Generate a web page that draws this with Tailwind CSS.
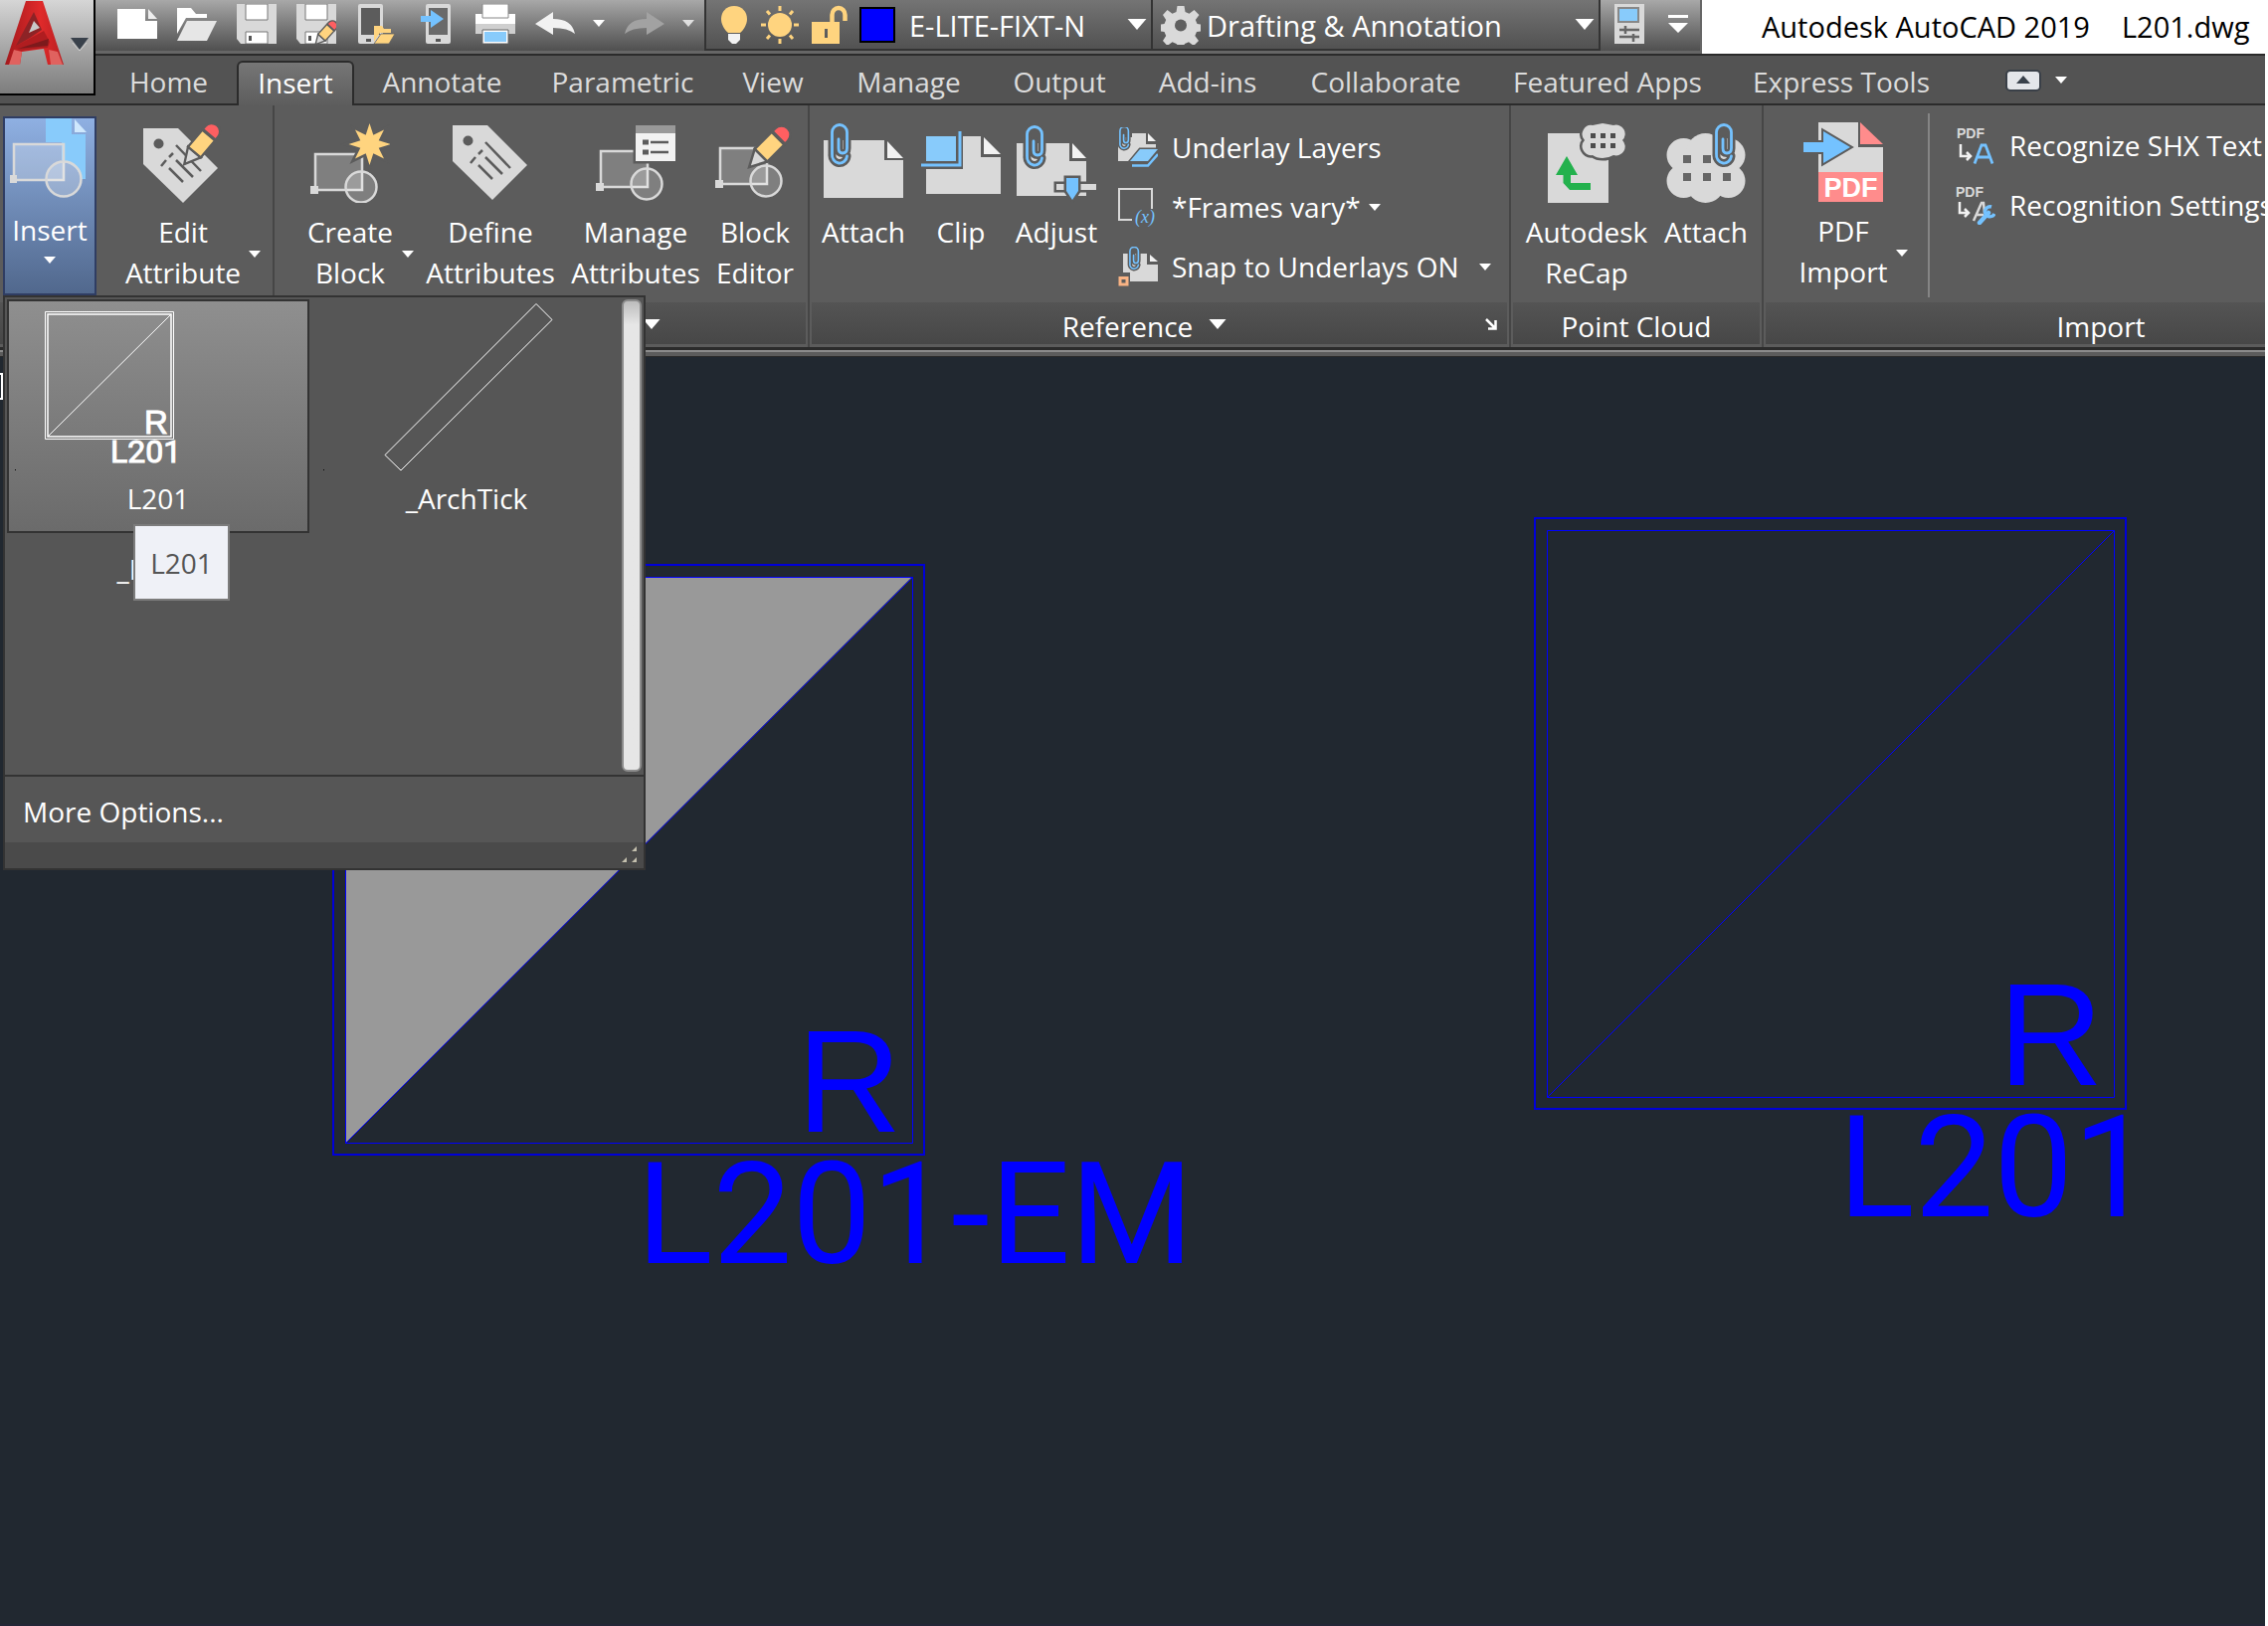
<!DOCTYPE html>
<html lang="en">
<head>
<meta charset="utf-8">
<meta name="viewport" content="width=device-width, initial-scale=1">
<title>Autodesk AutoCAD 2019 - L201.dwg</title>
<script src="https://cdn.jsdelivr.net/npm/@tailwindcss/browser@4"></script>
</head>
<body class="bg-white pr-[3px] min-h-screen flex flex-col overflow-x-hidden font-['Open_Sans',sans-serif] text-[28px] leading-[41px] text-white whitespace-nowrap">

<!-- shared icon parts -->
<svg class="hidden" aria-hidden="true">
  <symbol id="clip" viewBox="0 0 28 46" overflow="visible">
    <g fill="none" stroke-linecap="round">
      <path d="M15 17V26Q15 31 19 31Q23.500 31 23.500 26V10a7.500 7.500 0 0 0-15 0V32a7.500 8 0 0 0 15 2" stroke="#5c5c5c" stroke-width="8"/>
      <path d="M15 17V26Q15 31 19 31Q23.500 31 23.500 26V10a7.500 7.500 0 0 0-15 0V32a7.500 8 0 0 0 15 2" stroke="#74c2ff" stroke-width="2.800"/>
    </g>
  </symbol>
  <symbol id="pencil" viewBox="0 0 56 20" overflow="visible">
    <g stroke="#5c5c5c" stroke-width="2.500">
      <path d="M0 10L17 1V19Z" fill="#d9d9d9"/>
      <path d="M17 1H41V19H17Z" fill="#ffd47f"/>
      <path d="M42 1H46a9 9 0 0 1 0 18H42Z" fill="#ff5f61"/>
    </g>
  </symbol>
  <symbol id="block" viewBox="0 0 72 50" overflow="visible">
    <path d="M5 4H52V40H5Z" fill="#fff" fill-opacity=".22" stroke="#d9d9d9" stroke-width="2.500"/>
    <rect x="0" y="36" width="8" height="8" fill="#d9d9d9"/>
    <circle cx="51" cy="37" r="15.500" fill="#fff" fill-opacity=".22" stroke="#d9d9d9" stroke-width="2.500"/>
  </symbol>
  <symbol id="tag" viewBox="0 0 80 80" overflow="visible">
    <path d="M0 2H35L75 42L40 77L0 38Z" fill="#d9d9d9"/>
    <circle cx="15.500" cy="17.500" r="5" fill="#5c5c5c"/>
    <path d="M33 19L58 45M30 27L26 31M23 34L18 40M33 34L50 51M26 42L40 56" fill="none" stroke="#5c5c5c" stroke-width="2.500"/>
  </symbol>
  <symbol id="down" viewBox="0 0 12 7"><path d="M0 0H12L6 7Z" fill="#fff"/></symbol>
</svg>

<header class="flex items-start bg-[#535353] border-b-2 border-[#2b2b2b]">
  <button aria-label="Application menu" class="shrink-0 w-24 h-24 flex items-start border-r-2 border-b-2 border-black bg-linear-to-b from-[#d6d6d6] to-[#7d7d7d]">
    <svg class="w-[94px] h-[90px]" viewBox="0 0 94 90">
      <defs><linearGradient id="red" x1="0" x2="1"><stop offset="0" stop-color="#a3191d"/><stop offset=".6" stop-color="#e02a2a"/><stop offset="1" stop-color="#b81f22"/></linearGradient></defs>
      <path d="M26 1H43L64 65H48L44 49L22 52L20 65H5Z" fill="url(#red)"/>
      <path d="M34 12L16 46L30 38L42 30Z" fill="#8d2326"/>
      <path d="M34 21L29 33L40 28Z" fill="#c9c9c9"/>
      <path d="M15 47L44 31L50 42L48 48L20 51Z" fill="#b01d20"/>
      <path d="M18 49L49 39L48 46Z" fill="#7d1a1c"/>
      <path d="M14 50L22 52L20 65H9Z" fill="#e0625f"/><path d="M49 50L58 52L63 65H51Z" fill="#e0625f"/>
      <path d="M71 38H89L80 50Z" fill="#39414b"/><path d="M73 43L80 51L87 43" fill="none" stroke="#d0d0d0" stroke-width="1"/>
    </svg>
  </button>
  <div class="flex-1 min-w-0">
    <div class="flex h-14 border-b-2 border-[#2b2b2b] bg-white overflow-hidden text-[29px]">
      <div class="shrink-0 flex w-[1615px] border-b-3 border-[#666] border-r-2 bg-linear-to-b from-[#a8a8a8] to-[#505050]">
        <div class="flex items-center w-[612px] pl-[22px] pb-1 gap-5">
          <button aria-label="New"><svg class="w-10 h-10" viewBox="0 0 40 40"><path d="M0 5H28V17H40V35H0Z" fill="#fff"/><path d="M31 5L40 15H31Z" fill="#eee"/></svg></button>
          <button aria-label="Open"><svg class="w-10 h-10" viewBox="0 0 40 40"><path d="M0 4H14L19 10H30V14H9L0 30Z" fill="#fff"/><path d="M10 17H40L30 37H0Z" fill="#e6e6e6"/></svg></button>
          <button aria-label="Save"><svg class="w-10 h-10" viewBox="0 0 40 40"><path d="M0 0H40V40H4L0 35Z" fill="#d9d9d9"/><path d="M9 0H31V16H9Z" fill="#fff" stroke="#777"/><path d="M9 28H31V40H9Z" fill="#fff" stroke="#777"/><path d="M12 32H15V37H12Z" fill="#555"/></svg></button>
          <button aria-label="Save as"><svg class="w-10 h-10" viewBox="0 0 40 40"><path d="M0 0H40V40H4L0 35Z" fill="#d9d9d9"/><path d="M9 0H31V16H9Z" fill="#fff" stroke="#777"/><path d="M9 28H31V40H9Z" fill="#fff" stroke="#777"/><path d="M12 32H15V37H12Z" fill="#555"/><use href="#pencil" width="31" height="11" transform="translate(15 37) rotate(-48)"/></svg></button>
          <button aria-label="Open from mobile"><svg class="w-10 h-10" viewBox="0 0 40 40"><rect x="2" width="25" height="40" rx="2" fill="#d9d9d9"/><path d="M5 4H24V31H5Z" fill="#5c5c5c"/><path d="M10 35H15V38H10Z" fill="#555"/><path d="M18 22H26L28 25H35V29H24L18 38Z" fill="#ffd47f"/><path d="M25 30H39L33 40H18Z" fill="#ffd47f" stroke="#666" stroke-width=".8"/></svg></button>
          <button aria-label="Save to mobile"><svg class="w-10 h-10" viewBox="0 0 40 40"><rect x="10" width="25" height="40" rx="2" fill="#d9d9d9"/><path d="M13 4H32V31H13Z" fill="#6a6a6a"/><path d="M20 35H25V38H20Z" fill="#555"/><path d="M5 12H15V6L28 15L15 24V18H5Z" fill="#74c2ff"/></svg></button>
          <button aria-label="Plot"><svg class="w-10 h-10" viewBox="0 0 40 40"><path d="M0 10H40V30H0Z" fill="#fff"/><path d="M0 20H40V30H0Z" fill="#cfcfcf"/><path d="M7 0H33V14H7Z" fill="#fff" stroke="#888"/><path d="M7 26H33V40H7Z" fill="#fff" stroke="#666"/><path d="M9 28H31V38H9Z" fill="#88cbfb"/></svg></button>
          <button aria-label="Undo"><svg class="w-10 h-10" viewBox="0 0 40 40"><path d="M0 20L18 8V15Q37 15 40 30Q33 24 18 24V31Z" fill="#f2f2f2"/></svg></button>
          <button aria-label="Undo history" class="-ml-0.5"><svg class="w-3 h-[7px]"><use href="#down"/></svg></button>
          <button aria-label="Redo"><svg class="w-10 h-10" viewBox="0 0 40 40"><path d="M40 20L22 8V15Q3 15 0 30Q7 24 22 24V31Z" fill="#a2a2a2"/></svg></button>
          <button aria-label="Redo history" class="-ml-0.5 opacity-75"><svg class="w-3 h-[7px]"><use href="#down"/></svg></button>
        </div>
        <div class="flex items-center w-[451px] pl-3.5 pr-1 gap-3 border-2 border-t-0 border-[#333] bg-linear-to-b from-[#747474] to-[#525252]">
          <svg class="shrink-0 w-7 h-10" viewBox="0 0 28 40"><path d="M14 1C6 1 1 7 1 14C1 19 4 25 8 28H20C24 25 27 19 27 14C27 7 22 1 14 1Z" fill="#ffd47f"/><path d="M8 29H20V35L16 39H12L8 35Z" fill="#f2f2f2"/></svg>
          <svg class="shrink-0 w-10 h-10" viewBox="-1 0 40 40"><ellipse cx="19" cy="20" rx="12" ry="12" fill="#ffd47f"/><path d="M19 1V6M19 34V39M0 20H5M33 20H38M6 6L9 9.500M32 6L29 9.500M6 34L9 30.500M32 34L29 30.500" stroke="#ffd47f" stroke-width="3"/></svg>
          <svg class="shrink-0 w-9 h-10" viewBox="0 0 36 40"><path d="M0 17H28V39H0ZM13 24V33H16V24Z" fill="#ffd47f" fill-rule="evenodd"/><path d="M20.500 17V10a6.500 7 0 0 1 13 0V16" fill="none" stroke="#ffd47f" stroke-width="4.500"/></svg>
          <span class="shrink-0 w-9 h-9 bg-[#00f] border-2 border-black"></span>
          <select aria-label="Layer" class="appearance-none bg-transparent flex-1 min-w-0 pl-0.5 pt-0.5 outline-none"><option>E-LITE-FIXT-N</option></select>
          <svg class="shrink-0 w-5 h-[11px] pointer-events-none"><use href="#down"/></svg>
        </div>
        <div class="flex items-center w-[450px] pl-2 pr-1 gap-1.5 border-2 border-l-0 border-t-0 border-[#333] bg-linear-to-b from-[#747474] to-[#525252]">
          <svg class="shrink-0 w-10 h-10" viewBox="0 0 40 40"><path d="M16.500 1h7l1 6 4 1.700 5-3.700 5 5-3.700 5 1.700 4 3.500.5v7l-4 .5-1.700 4 3.700 5-5 5-5-3.700-4 1.700-.5 1h-7l-1-1-4-1.700-5 3.700-4.500-5 3.200-5-1.700-4-4-.5v-7l4-.5 1.700-4-3.200-5 4.500-5 5 3.700 4-1.700Z" fill="#d9d9d9"/><circle cx="20" cy="20.500" r="6" fill="#5f5f5f"/></svg>
          <select aria-label="Workspace" class="appearance-none bg-transparent flex-1 min-w-0 pt-0.5 outline-none"><option>Drafting &amp; Annotation</option></select>
          <svg class="shrink-0 w-5 h-[11px] pointer-events-none"><use href="#down"/></svg>
        </div>
        <div class="flex items-center pl-3.5 pb-1 gap-6">
          <button aria-label="Properties"><svg class="w-[30px] h-10" viewBox="0 0 30 40"><path d="M0 0H30V40H0Z" fill="#d9d9d9"/><path d="M4 4H24V18H4Z" fill="#88cbfb" stroke="#888" stroke-width="2"/><path d="M5 26H25M5 33H25" stroke="#666" stroke-width="2.500"/><path d="M11 22V30M19 30V38" stroke="#666" stroke-width="2.500"/></svg></button>
          <button aria-label="Customize toolbar"><svg class="w-5 h-[18px]" viewBox="0 0 20 18"><path d="M0 0H20V3H0ZM0 8H20L10 18Z" fill="#fff"/></svg></button>
        </div>
      </div>
      <h1 class="flex-1 flex items-center pl-[60px] pb-0.5 gap-8 text-black"><span>Autodesk AutoCAD 2019</span><span>L201.dwg</span></h1>
    </div>
    <nav aria-label="Ribbon tabs" class="flex h-12 pt-[5px] pl-[5px] text-[#dcdcdc]">
      <button class="shrink-0 w-[137px] pb-px">Home</button>
      <button class="shrink-0 w-[118px] h-[45px] relative pb-1 border-2 border-b-0 border-[#2b2b2b] rounded-t-md bg-linear-to-b from-[#767676] to-[#5d5d5d] text-white">Insert</button>
      <button class="shrink-0 w-[177px] pb-px">Annotate</button>
      <button class="shrink-0 w-[186px] pb-px">Parametric</button>
      <button class="shrink-0 w-[116px] pb-px">View</button>
      <button class="shrink-0 w-[157px] pb-px">Manage</button>
      <button class="shrink-0 w-[146px] pb-px">Output</button>
      <button class="shrink-0 w-[152px] pb-px">Add-ins</button>
      <button class="shrink-0 w-[206px] pb-px">Collaborate</button>
      <button class="shrink-0 w-[240px] pb-px">Featured Apps</button>
      <button class="shrink-0 w-[230px] pb-px">Express Tools</button>
      <div class="flex items-center pl-[50px] gap-3.5 pb-1">
        <button aria-label="Minimize ribbon"><svg class="w-9 h-[22px]" viewBox="0 0 36 22"><rect x="1" y="1" width="34" height="20" rx="4" fill="#e4e6ea" stroke="#3a4048" stroke-width="2"/><path d="M11 14H25L18 6Z" fill="#39414b"/></svg></button>
        <button aria-label="Ribbon display options"><svg class="w-3 h-[7px]"><use href="#down"/></svg></button>
      </div>
    </nav>
  </div>
</header>

<div class="relative flex-1 flex flex-col">
  <div class="flex h-[243px] overflow-hidden bg-[#5c5c5c] text-center">

    <section aria-label="Block" class="shrink-0 w-[274px] flex flex-col">
      <div class="flex items-start h-[198px] pl-[3px]">
        <button class="shrink-0 w-[94px] h-[180px] mt-[11px] border-2 border-[#2f3d63] bg-linear-to-b from-[#8fb0e2] to-[#51688d] flex flex-col items-center">
          <svg class="w-20 h-20" viewBox="0 0 80 80">
            <path d="M36 0H62V16H76V61H72Q69 48 52 42V24H36Z" fill="#88cbfb"/><path d="M65 1L77 14H65Z" fill="#cfe8fd"/>
            <path d="M4 26H54V62H4Z" fill="#fff" fill-opacity=".25" stroke="#d9d9d9" stroke-width="2.500"/>
            <rect x="0" y="57" width="7" height="8" fill="#d9d9d9"/>
            <circle cx="54" cy="61" r="17.500" fill="#fff" fill-opacity=".25" stroke="#d9d9d9" stroke-width="2.500"/>
          </svg>
          <span class="mt-3">Insert</span>
          <svg class="w-3 h-[7px] mt-1.5"><use href="#down"/></svg>
        </button>
        <button class="ml-[23px] pt-[18px] flex items-center">
          <span class="w-32 flex flex-col items-center">
            <svg class="w-20 h-20" viewBox="0 0 80 80"><use href="#tag" y="3" width="80" height="80"/><use href="#pencil" width="52" height="19" transform="translate(34 35) rotate(-50)"/></svg>
            <span class="mt-[9px]">Edit<br>Attribute</span>
          </span>
          <svg class="ml-0.5 mt-[92px] w-3 h-[7px]"><use href="#down"/></svg>
        </button>
      </div>
      <div class="h-[42px] mr-0.5 bg-linear-to-b from-[#545454] to-[#474747]"></div>
    </section>

    <section aria-label="Block Definition" class="shrink-0 w-[538px] flex flex-col border-l-2 border-[#464646]">
      <div class="flex items-start h-[198px] pl-[26px] pt-[18px]">
        <button class="flex items-center">
          <span class="w-[100px] flex flex-col items-center">
            <svg class="w-20 h-20" viewBox="0 0 80 80"><use href="#block" y="27" width="72" height="50"/><path transform="translate(59.500 21)" d="M0-21L3.800-9.200L14.500-14.500L9.200-3.800L21 0L9.200 3.800L14.500 14.500L3.800 9.200L0 21L-3.800 9.200L-14.500 14.500L-9.200 3.800L-21 0L-9.200-3.800L-14.500-14.500L-3.800-9.200Z" fill="#ffd47f" stroke="#5c5c5c" stroke-width="5" paint-order="stroke"/></svg>
            <span class="mt-[9px]">Create<br>Block</span>
          </span>
          <svg class="ml-0.5 mt-[92px] w-3 h-[7px]"><use href="#down"/></svg>
        </button>
        <button class="ml-3 w-[130px] shrink-0 flex flex-col items-center">
          <svg class="w-20 h-20" viewBox="-2 0 80 80"><use href="#tag" width="80" height="80"/></svg>
          <span class="mt-[9px]">Define<br>Attributes</span>
        </button>
        <button class="ml-4 w-[130px] shrink-0 flex flex-col items-center">
          <svg class="w-20 h-20" viewBox="0 0 80 80"><use href="#block" y="24" width="72" height="50"/><path d="M40 2H80V38H40Z" fill="#f2f2f2" stroke="#5c5c5c" stroke-width="5" paint-order="stroke"/><path d="M40 2H80V10H40Z" fill="#999"/><path d="M47 16.500h6v5h-6zM47 26.500h6v5h-6z" fill="#5c5c5c"/><path d="M55 19H73M55 29H73" stroke="#5c5c5c" stroke-width="2.500"/></svg>
          <span class="mt-[9px]">Manage<br>Attributes</span>
        </button>
        <button class="ml-[15px] w-20 shrink-0 flex flex-col items-center">
          <svg class="w-20 h-20" viewBox="0 0 80 80"><use href="#block" y="21" width="72" height="50"/><use href="#pencil" width="56" height="20" transform="translate(27 37) rotate(-45)"/></svg>
          <span class="mt-[9px]">Block<br>Editor</span>
        </button>
      </div>
      <div class="h-[42px] mx-0.5 pt-1 flex justify-center items-start gap-4 bg-linear-to-b from-[#545454] to-[#474747]">
        <span>Block Definition</span><svg class="mt-[13px] w-[18px] h-2.5"><use href="#down"/></svg>
      </div>
    </section>

    <section aria-label="Reference" class="shrink-0 w-[705px] flex flex-col border-l-2 border-[#464646]">
      <div class="flex items-start h-[198px] pl-[11px] pt-[18px]">
        <button class="w-[86px] shrink-0 flex flex-col items-center">
          <svg class="w-20 h-20" viewBox="0 0 80 80"><path d="M0 17H61V37H80V75H0Z" fill="#d9d9d9"/><path d="M64 18L80 35H64Z" fill="#f2f2f2"/><use href="#clip" width="28" height="46" y="-1"/></svg>
          <span class="mt-[9px]">Attach</span>
        </button>
        <button class="ml-[15px] w-20 shrink-0 flex flex-col items-center">
          <svg class="w-20 h-20" viewBox="0 0 80 80"><path d="M42 13H60V34H80V71H5V46H42Z" fill="#d9d9d9"/><path d="M63 14L80 31H63Z" fill="#f2f2f2"/><path d="M5 13H35V38H5Z" fill="#88cbfb"/><path d="M39 8V42H0" fill="none" stroke="#74c2ff" stroke-width="3"/></svg>
          <span class="mt-[9px]">Clip</span>
        </button>
        <button class="ml-[13px] w-[86px] shrink-0 flex flex-col items-center">
          <svg class="w-20 h-20" viewBox="0 0 80 80"><path d="M0 20H53V38H70V73H0Z" fill="#d9d9d9"/><path d="M56 20L70 35H56Z" fill="#f2f2f2"/><use href="#clip" width="28" height="46" x="2" y="1"/><path d="M40 61H80V67H40Z" fill="#d9d9d9" stroke="#5c5c5c" stroke-width="5" paint-order="stroke"/><path d="M50 55H62V68L56 77L50 68Z" fill="#74c2ff" stroke="#5c5c5c" stroke-width="5" paint-order="stroke"/></svg>
          <span class="mt-[9px]">Adjust</span>
        </button>
        <div class="ml-[19px] pt-1 flex flex-col gap-5">
          <button class="h-10 flex items-center gap-3.5">
            <svg class="w-10 h-10" viewBox="0 0 40 40"><path d="M0 10H14V6H28V17H38V24L22 34H0Z" fill="#d9d9d9"/><path d="M30 6L38 14H30Z" fill="#f2f2f2"/><path d="M22 22H40L30 34H12Z" fill="#88cbfb" stroke="#5c5c5c" stroke-width="3" paint-order="stroke"/><path d="M40 27L30 38.500H14" fill="none" stroke="#74c2ff" stroke-width="2.500"/><use href="#clip" width="16" height="26" x="-3" y="-2"/></svg>
            <span>Underlay Layers</span>
          </button>
          <button class="h-10 flex items-center">
            <svg class="w-10 h-10" viewBox="0 0 40 40"><path d="M14 33H1V2H34V22" fill="none" stroke="#d9d9d9" stroke-width="2"/><text x="17" y="36" font-family="Liberation Serif" font-style="italic" font-size="18" fill="#74c2ff">(x)</text></svg>
            <span class="ml-3.5 mr-2">*Frames vary*</span><svg class="w-3 h-[7px]"><use href="#down"/></svg>
          </button>
          <button class="h-10 flex items-center">
            <svg class="w-10 h-10" viewBox="0 0 40 40"><path d="M5 7H29V18H40V35H12V26H5Z" fill="#d9d9d9"/><path d="M32 8L40 15H32Z" fill="#f2f2f2"/><use href="#clip" width="16" height="26" x="7" y="-1"/><path d="M2 31.500H9V38H2Z" fill="none" stroke="#f9b384" stroke-width="3"/></svg>
            <span class="ml-3.5 mr-5">Snap to Underlays ON</span><svg class="w-3 h-[7px]"><use href="#down"/></svg>
          </button>
        </div>
      </div>
      <div class="h-[42px] mx-0.5 pt-1 flex items-start bg-linear-to-b from-[#545454] to-[#474747]">
        <div class="flex-1 flex justify-center gap-4 pr-2"><span>Reference</span><svg class="mt-[13px] w-[18px] h-2.5"><use href="#down"/></svg></div>
        <button aria-label="Reference settings" class="mt-3 mr-2.5"><svg class="w-3 h-3" viewBox="0 0 12 12"><path d="M1 1L10 10M3 10.500H10.500V2" fill="none" stroke="#fff" stroke-width="2.500"/></svg></button>
      </div>
    </section>

    <section aria-label="Point Cloud" class="shrink-0 w-[254px] flex flex-col border-l-2 border-[#464646]">
      <div class="flex items-start h-[198px] pl-[11px] pt-[18px]">
        <button class="w-[130px] shrink-0 flex flex-col items-center">
          <svg class="w-20 h-20" viewBox="0 0 80 80"><path d="M1 10H62V80H1Z" fill="#d9d9d9"/>
            <g fill="#d9d9d9" stroke="#5c5c5c" stroke-width="5" paint-order="stroke"><path d="M46 2q5-1 10-2q6 1 11 2a9 9 0 0 1 9 15a9 9 0 0 1-9 15q-5 3-11 3q-6 0-10-3a9 9 0 0 1-8-15a9 9 0 0 1 8-15Z"/></g>
            <path d="M44 10h5v5h-5zM54 10h5v5h-5zM64 10h5v5h-5zM44 20h5v5h-5zM54 20h5v5h-5zM64 20h5v5h-5z" fill="#4c4c4c"/>
            <path d="M20 33L31 52H24V60H44V67H23L16.500 60V52H9Z" fill="#23b14d"/></svg>
          <span class="mt-[9px]">Autodesk<br>ReCap</span>
        </button>
        <button class="ml-3 w-[86px] shrink-0 flex flex-col items-center">
          <svg class="w-20 h-20" viewBox="0 0 80 80"><g fill="#d9d9d9"><circle cx="17.500" cy="32" r="17"/><circle cx="39.500" cy="29" r="19"/><circle cx="62.500" cy="32" r="17"/><circle cx="17.500" cy="58" r="17"/><circle cx="39.500" cy="61" r="19"/><circle cx="62.500" cy="58" r="17"/><path d="M12 30H68V60H12Z"/></g><path d="M17 32h8v8h-8zM37 32h8v8h-8zM17 50h8v8h-8zM37 50h8v8h-8zM57 50h8v8h-8z" fill="#666"/><use href="#clip" width="28" height="46" x="42" y="-1"/></svg>
          <span class="mt-[9px]">Attach</span>
        </button>
      </div>
      <div class="h-[42px] mx-0.5 pt-1 bg-linear-to-b from-[#545454] to-[#474747]">Point Cloud</div>
    </section>

    <section aria-label="Import" class="shrink-0 w-[680px] flex flex-col border-l-2 border-[#464646]">
      <div class="flex items-start h-[198px] pl-[30px]">
        <button class="pt-[17px] flex items-center">
          <span class="w-[100px] flex flex-col items-center">
            <svg class="w-20 h-20" viewBox="0 0 80 80"><path d="M15 0H55V25H80V50H15Z" fill="#d9d9d9"/><path d="M57 0L80 22H57Z" fill="#ff8c8c"/><path d="M15 50H80V80H15Z" fill="#ff8c8c"/><text x="47.500" y="75" text-anchor="middle" font-family="Liberation Sans" font-weight="700" font-size="27" fill="#fff">PDF</text><path d="M0 20H20V9L47 25L20 41V30H0Z" fill="#74c2ff" stroke="#5c5c5c" stroke-width="4" paint-order="stroke"/></svg>
            <span class="mt-[9px]">PDF<br>Import</span>
          </span>
          <svg class="ml-[3px] mt-[92px] w-3 h-[7px]"><use href="#down"/></svg>
        </button>
        <div class="ml-5 mt-2 w-0.5 h-[185px] bg-[#858585]"></div>
        <div class="ml-[26px] pt-5 flex flex-col gap-5">
          <button class="h-10 flex items-center gap-3.5">
            <svg class="w-10 h-10" viewBox="0 0 40 40"><text x="1" y="13" font-family="Liberation Sans" font-size="14" font-weight="700" fill="#d9d9d9">PDF</text><path d="M5 19V31H14M11 27L15 31L11 35" fill="none" stroke="#f2f2f2" stroke-width="2.500"/><path d="M19 38.500L26 20H30L37 38.500M22 32H34" fill="none" stroke="#74c2ff" stroke-width="2.800"/></svg>
            <span>Recognize SHX Text</span>
          </button>
          <button class="h-10 flex items-center gap-3.5">
            <svg class="w-10 h-10" viewBox="0 0 40 40"><text x="0" y="12" font-family="Liberation Sans" font-size="14" font-weight="700" fill="#d9d9d9">PDF</text><path d="M4 17V28H12M9 24L13 28L9 32" fill="none" stroke="#f2f2f2" stroke-width="2.500"/><path d="M18 36L26 18H28L29 28M21 30H28" fill="none" stroke="#d9d9d9" stroke-width="2.500"/><path d="M24 38L33 28" stroke="#74c2ff" stroke-width="4.500" stroke-linecap="round"/><path d="M36 22a5 5 0 1 0 3 7" fill="none" stroke="#74c2ff" stroke-width="3.500"/></svg>
            <span>Recognition Settings</span>
          </button>
        </div>
      </div>
      <div class="h-[42px] mx-0.5 pt-1 bg-linear-to-b from-[#545454] to-[#474747]">Import</div>
    </section>
  </div>
  <div class="h-2.5 border-t-3 border-b-1 border-[#2b2b2b] bg-linear-to-b from-[#8b8b8b] from-30% to-[#5c5c5c] to-30%"></div>

  <main aria-label="Drawing area" class="relative flex-1 bg-[#212830] border-b-2 border-[#232636] overflow-hidden">
    <span class="absolute left-0 top-4 w-[3px] h-[27px] border-2 border-l-0 border-white"></span>
    <svg class="absolute left-[334px] top-[208px] w-[940px] h-[740px]" viewBox="0 0 940 740">
      <path d="M13 13H583L13 583Z" fill="#999"/>
      <g fill="none" stroke="#00f"><path d="M1 1H595V594H1Z" stroke="#0000d8" stroke-width="2"/><path d="M13.500 13.500H583.500V582.500H13.500ZM13.500 582.500L583.500 13.500"/></g>
      <text x="467" y="571" font-family="Liberation Sans" font-size="146" fill="#00f">R</text>
      <text x="306" y="703" font-family="Roboto" font-size="142" fill="#00f">L201-EM</text>
    </svg>
    <svg class="absolute left-[1542px] top-[161px] w-[640px] h-[740px]" viewBox="0 0 640 740">
      <g fill="none" stroke="#00f"><path d="M1 1H595V595H1Z" stroke="#0000d8" stroke-width="2"/><path d="M13.500 13.500H583.500V583.500H13.500ZM13.500 583.500L583.500 13.500"/></g>
      <text x="467" y="571" font-family="Liberation Sans" font-size="146" fill="#00f">R</text>
      <text x="306" y="703" font-family="Roboto" font-size="142" fill="#00f">L201</text>
    </svg>
  </main>

  <!-- block gallery dropped from the Insert button -->
  <div class="absolute left-[3px] top-[191px] w-[646px] border-2 border-[#333] bg-[#565656]">
    <div class="flex h-[482px] border-b-2 border-[#333]">
      <div class="grid grid-cols-[304px_304px] auto-rows-min gap-x-1.5 pl-0.5 pt-0.5 w-[620px] text-center">
        <button class="relative h-[235px] border-2 border-[#333] bg-linear-to-b from-[#8f8f8f] to-[#6b6b6b] flex flex-col">
          <svg class="w-[300px] h-[178px]" viewBox="-1 -1 300 178"><g fill="none" stroke="#fff"><path d="M35.500 9.500H164.500V137.500H35.500Z"/><path d="M38 12H162V135H38Z" stroke-width="1.500"/><path d="M38 135L162 12"/></g><g fill="#fff" stroke="#fff"><text x="135" y="132" font-family="Liberation Sans" font-size="33">R</text><text x="101" y="161" font-family="Roboto" font-size="32">L201</text></g><path d="M5 168h1v1h-1z" fill="#000"/></svg>
          <span class="w-full">L201</span>
        </button>
        <button class="h-[235px] border-2 border-transparent flex flex-col">
          <svg class="w-[300px] h-[178px]" viewBox="-1 -1 300 178"><path d="M219 1.500L235 17.500L83 169L67 153.500Z" fill="none" stroke="#fff"/><path d="M5 168h1v1h-1z" fill="#000"/></svg>
          <span class="w-full">_ArchTick</span>
        </button>
        <button class="pt-4">_None</button>
      </div>
      <div class="mt-0.5 w-5 h-[475px] rounded-md border-2 border-[#8c8c8c] bg-linear-to-b from-[#bdbdbd] via-[#e6e6e6] via-5% to-[#e6e6e6]"></div>
    </div>
    <button class="block w-full h-[66px] pl-[18px] pt-1 text-left">More Options...</button>
    <div class="h-[26px] bg-[#4a4a4a] flex justify-end pr-1.5 pt-1"><svg class="w-4 h-4" viewBox="0 0 16 16"><path d="M10 5L15 0V5ZM0 16L5 11V16ZM10 16L15 11V16Z" fill="#c4c0ae"/></svg></div>
  </div>
  <div role="tooltip" class="absolute left-[134px] top-[421px] w-[97px] h-[77px] pt-[17px] text-center border-2 border-[#7c7c7c] bg-[#eff1f7] text-[#555]">L201</div>
</div>
</body>
</html>
